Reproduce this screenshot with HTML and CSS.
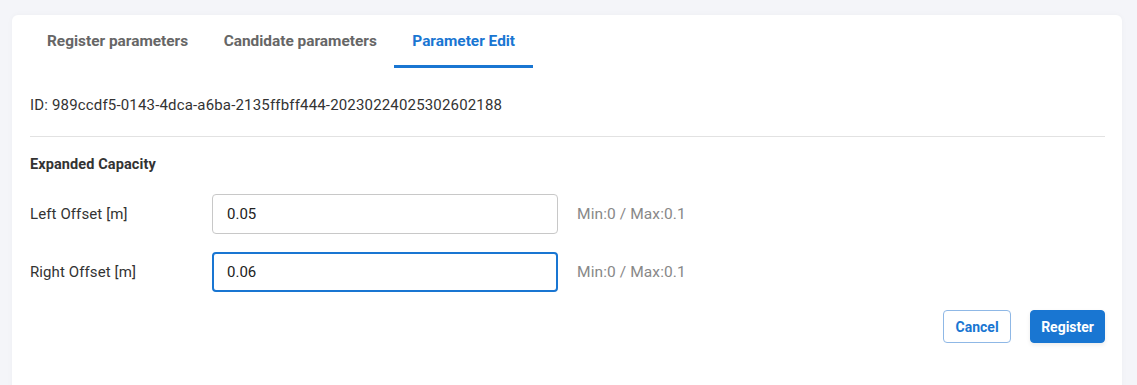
FILE: index.html
```html
<!DOCTYPE html>
<html>
<head>
    <meta charset="UTF-8">
    <title>Parameter Edit</title>
    <link rel="stylesheet" href="styles.css">
</head>
<body>
    <div class="card">
        <div class="tabs">
            <a class="tab">Register parameters</a>
            <a class="tab">Candidate parameters</a>
            <a class="tab active">Parameter Edit</a>
        </div>

        <div class="id-row">ID: 989ccdf5-0143-4dca-a6ba-2135ffbff444-20230224025302602188</div>
        <hr class="divider">

        <h3 class="section-title">Expanded Capacity</h3>

        <div class="field">
            <label>Left Offset [m]</label>
            <input type="text" value="0.05">
            <span class="hint">Min:0 / Max:0.1</span>
        </div>
        <div class="field">
            <label>Right Offset [m]</label>
            <input type="text" class="focused" value="0.06">
            <span class="hint">Min:0 / Max:0.1</span>
        </div>

        <div class="actions">
            <button class="btn btn-outline">Cancel</button>
            <button class="btn btn-primary">Register</button>
        </div>
    </div>
</body>
</html>
```

FILE: styles.css
```css
body {
    margin: 0;
    padding: 15px 15px 0 12px;
    background-color: #f4f5f9;
    font-family: Roboto, "Liberation Sans", Arial, sans-serif;
    color: #333;
    font-size: 15px;
    letter-spacing: 0.1px;
    height: 385px;
    box-sizing: border-box;
    overflow: hidden;
}
.card {
    background-color: white;
    border-radius: 6px;
    padding: 0 17px 52px 18px;
    box-shadow: 0 0 6px rgba(0, 0, 0, 0.03);
}
.tabs {
    display: flex;
    height: 53px;
}
.tab {
    display: flex;
    align-items: center;
    padding: 2px 17.5px 0 17px;
    font-size: 15.4px;
    font-weight: bold;
    letter-spacing: 0;
    color: #666;
    box-sizing: border-box;
    border-bottom: 3px solid transparent;
}
.tab + .tab {
    padding-left: 18px;
}
.tab.active {
    color: #1976d2;
    border-bottom-color: #1976d2;
}
.id-row {
    margin-top: 28px;
    line-height: 18px;
    letter-spacing: 0.17px;
}
.divider {
    border: 0;
    border-top: 1px solid #e2e2e2;
    margin: 22px 0 0 0;
}
.section-title {
    font-size: 14.5px;
    font-weight: bold;
    margin: 19px 0 20px 0;
    line-height: 18px;
}
.field {
    display: flex;
    align-items: center;
    margin-bottom: 18px;
}
.field label {
    width: 182px;
}
.field input {
    width: 346px;
    height: 40px;
    box-sizing: border-box;
    border: 1px solid #c8c8c8;
    border-radius: 4px;
    padding: 0 14px;
    font-family: inherit;
    font-size: 15px;
    color: #222;
    outline: none;
}
.field input.focused {
    border: 2px solid #1976d2;
    padding: 0 13px;
}
.hint {
    margin-left: 19px;
    color: #888;
    font-size: 15.5px;
    letter-spacing: 0.1px;
}
.actions {
    display: flex;
    justify-content: flex-end;
    gap: 19px;
    margin-top: 1px;
}
.btn {
    height: 33px;
    border-radius: 4px;
    font-family: inherit;
    font-size: 14px;
    font-weight: bold;
    padding: 0 11.5px;
    cursor: pointer;
}
.btn-outline {
    background: white;
    color: #1976d2;
    border: 1px solid #8fb8e6;
}
.btn-primary {
    background: #1976d2;
    color: white;
    border: 1px solid #1976d2;
    padding: 0 10px;
    box-shadow: 0 2px 4px rgba(0, 0, 0, 0.08);
}
```
